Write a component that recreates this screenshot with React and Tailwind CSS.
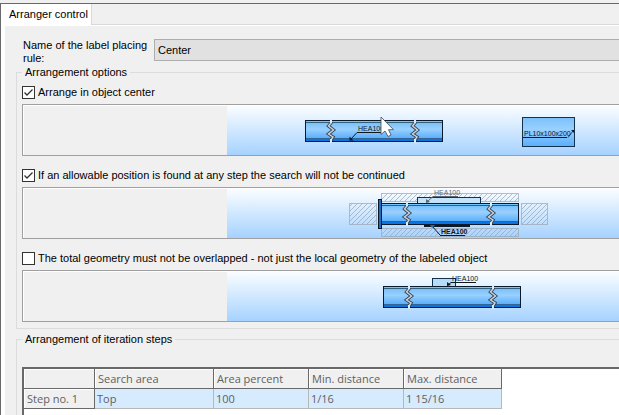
import { useState } from "react";
import clsx from "clsx";

const columns = [
  { name: "Search area", width: "w-[119px]" },
  { name: "Area percent", width: "w-[95px]" },
  { name: "Min. distance", width: "w-[95px]" },
  { name: "Max. distance", width: "w-[98px]" },
];

const steps = [{ name: "Step no. 1", values: ["Top", "100", "1/16", "1 15/16"] }];

const Break = ({ x }) => {
  const zigzag = `M${x} 2 V3 L${x - 2.5} 6 L${x + 2.5} 10 L${x - 2.5} 14 L${x + 2} 17 L${x} 20`;
  return (
    <g fill="none">
      <path d={zigzag} stroke="#33414f" strokeWidth="3.2" />
      <path d={zigzag} stroke="#c8d3de" strokeWidth="1.5" />
      <path d={`M${x} -1 V3 M${x} 19 V23`} stroke="#dcecfb" strokeWidth="2" />
    </g>
  );
};

const Beam = ({ x }) => (
  <g transform={`translate(${x} 14)`}>
    <rect width="138" height="22" fill="#0b1a2a" />
    <rect x="1" y="1" width="136" height="1.4" fill="#6fcbff" />
    <rect x="1" y="3" width="136" height="15.5" fill="url(#steel)" />
    <rect x="1" y="19" width="136" height="2" fill="#0a74e6" />
    <Break x={26} />
    <Break x={110} />
  </g>
);

const Hatch = ({ x, y, width, height }) => (
  <rect
    x={x + 0.5}
    y={y + 0.5}
    width={width}
    height={height}
    fill="url(#hatch)"
    stroke="#9aa7b4"
    strokeOpacity="0.7"
  />
);

const Tag = ({ x, y, width = 25, color = "#101820", bold, children }) => (
  <g>
    <text
      x={x}
      y={y}
      fill={color}
      className={clsx("font-['Liberation_Sans'] text-[7px]", bold && "font-bold")}
    >
      {children}
    </text>
    <path d={`M${x - 1} ${y + 1.5} h${width}`} stroke={color} />
  </g>
);

const Defs = () => (
  <defs>
    <linearGradient id="steel" x1="0" y1="0" x2="0" y2="1">
      <stop offset="0" stopColor="#7cc0fa" />
      <stop offset="0.4" stopColor="#99d0ff" />
      <stop offset="1" stopColor="#58aefc" />
    </linearGradient>
    <pattern id="hatch" width="5" height="5" patternUnits="userSpaceOnUse">
      <path d="M-1 6 L6 -1 M-1 1 L1 -1 M4 6 L6 4" stroke="#94a3b2" strokeWidth="0.7" />
    </pattern>
  </defs>
);

const CenterDrawing = () => (
  <>
    <Beam x={78} />
    <Tag x={131} y={25}>HEA100</Tag>
    <path d="M130 26.5 L124 33" stroke="#101820" />
    <path d="M122.500 34.500 v-4 l4 4 z" fill="#101820" />
    <rect x="295.500" y="11.500" width="52" height="29" fill="url(#steel)" stroke="#14324d" />
    <Tag x={297} y={30} width={44}>PL10x100x200</Tag>
    <path d="M341 31.500 L346 25" stroke="#101820" strokeWidth="0.8" />
    <path d="M347 24 v3 l-3 -3 z" fill="#101820" />
    <path
      d="M154 11 V28.500 L158 25 L161 30.500 L164 29 L161.500 23.700 H166.500 Z"
      fill="#fff"
      stroke="#3a4656"
      strokeWidth="0.8"
    />
  </>
);

const SearchDrawing = () => (
  <>
    <Hatch x={122} y={14} width={27} height={21} />
    <Hatch x={154} y={4} width={137} height={8} />
    <Hatch x={154} y={39} width={137} height={8} />
    <Hatch x={294} y={14} width={26} height={21} />
    <rect x="190.500" y="8.500" width="63" height="6" fill="#c4e3fb" stroke="#14324d" />
    <rect x="197" y="35" width="46" height="3" fill="#0b1a2a" />
    <Beam x={154} />
    <rect x="151.500" y="10.500" width="3" height="29" fill="#1c6fc4" stroke="#0b1a2a" />
    <Tag x={207} y={6} color="#5c6874">HEA100</Tag>
    <path d="M206 7.500 L201 12" stroke="#5c6874" />
    <path d="M199 14 v-4 l4 3 z" fill="#5c6874" />
    <path d="M205 37 L213 46" stroke="#101820" />
    <path d="M203 36 h5 l-3 3 z" fill="#1c6fc4" />
    <Tag x={214} y={45} bold>HEA100</Tag>
  </>
);

const OverlapDrawing = () => (
  <>
    <rect x="205.500" y="6.500" width="23" height="8" fill="#b7dcfa" stroke="#14324d" />
    <Beam x={156} />
    <Tag x={225} y={9}>HEA100</Tag>
    <path d="M224 10.500 L221 13" stroke="#101820" />
    <path d="M220 14 v-4 l4 3 z" fill="#101820" />
  </>
);

const options = [
  { id: "center", label: "Arrange in object center", Drawing: CenterDrawing },
  {
    id: "stop",
    label: "If an allowable position is found at any step the search will not be continued",
    Drawing: SearchDrawing,
  },
  {
    id: "overlap",
    label: "The total geometry must not be overlapped - not just the local geometry of the labeled object",
    Drawing: OverlapDrawing,
  },
];

const Option = ({ option, checked, onChange }) => {
  const { id, label, Drawing } = option;
  return (
    <div>
      <div className="flex h-[13px] items-center gap-[3px]">
        <span className="grid size-[13px] shrink-0">
          <input
            id={id}
            type="checkbox"
            checked={checked}
            onChange={onChange}
            className="col-start-1 row-start-1 size-[13px] appearance-none border border-[#333] bg-white"
          />
          {checked && (
            <svg viewBox="0 0 13 13" className="pointer-events-none col-start-1 row-start-1 size-[13px]">
              <path d="M2.500 6.500 L5 9 L10.500 3.500" fill="none" stroke="#333" strokeWidth="1.3" />
            </svg>
          )}
        </span>
        <label htmlFor={id} className="whitespace-nowrap">{label}</label>
      </div>
      <div className="mt-[5px] flex h-[52px] border border-r-0 border-[#a0a0a0] bg-white pt-px pl-px">
        <div className="w-[203px] shrink-0 bg-[#f0f0f0]" />
        <div className="min-w-0 flex-1 overflow-hidden bg-linear-to-b from-[#fafdff] to-[#a6d2ff]">
          <svg width="392" height="49" viewBox="0 0 392 49">
            <Defs />
            <Drawing />
          </svg>
        </div>
      </div>
    </div>
  );
};

const headCell =
  "h-5 border-r border-b border-[#696969] bg-[#f0f0f0] pt-px pl-[3px] text-left font-normal shadow-[inset_1px_1px_0_#fff]";

const StepsTable = () => (
  <div className="min-h-[60px] border-t-2 border-l-2 border-[#696969] bg-white">
    <table className="table-fixed border-separate border-spacing-0 font-['Open_Sans','Noto_Sans',sans-serif] text-[11px] leading-[18px] text-[#606060]">
      <thead>
        <tr>
          <th className={clsx(headCell, "w-[71px]")} />
          {columns.map((column) => (
            <th key={column.name} scope="col" className={clsx(headCell, column.width)}>
              {column.name}
            </th>
          ))}
        </tr>
      </thead>
      <tbody>
        {steps.map((step) => (
          <tr key={step.name}>
            <th scope="row" className={headCell}>{step.name}</th>
            {step.values.map((value) => (
              <td key={value} className="h-5 border-r border-b border-[#b8b8b8] bg-[#d7ebff] pt-px pl-0.5">
                {value}
              </td>
            ))}
          </tr>
        ))}
      </tbody>
    </table>
  </div>
);

const Group = ({ title, children, className }) => (
  <fieldset className={clsx("min-w-0 border border-r-0 border-[#dcdcdc] pl-[5px]", className)}>
    <legend className="px-[3px]">{title}</legend>
    {children}
  </fieldset>
);

export default function App() {
  const [checked, setChecked] = useState({ center: true, stop: true, overlap: false });

  const toggle = (id) => setChecked({ ...checked, [id]: !checked[id] });

  return (
    <div className="flex min-h-screen flex-col overflow-hidden bg-[#f0f0f0] pt-[3px] font-['Liberation_Sans',Arial,sans-serif] text-[11px] leading-[13px] text-black">
      <div className="flex flex-1 flex-col border-t border-l border-[#696969]">
        <div role="tablist" className="flex border-l border-white">
          <button role="tab" aria-selected="true" className="h-[21px] w-[89px] bg-white pl-[7px] text-left whitespace-nowrap">
            Arranger control
          </button>
          <div className="flex-1 border-b border-l border-[#d9d9d9]" />
        </div>
        <main className="flex-1 border-t border-l-4 border-white pl-[11px]">
          <div className="flex items-start pt-[13px] pl-[7px]">
            <label htmlFor="rule" className="w-[131px] shrink-0">
              Name of the label placing rule:
            </label>
            <select
              id="rule"
              disabled
              className="h-[22px] min-w-0 flex-1 appearance-none border border-r-0 border-[#adadad] bg-[#e1e1e1] pl-[3px] text-black opacity-100"
            >
              <option>Center</option>
            </select>
          </div>
          <Group title="Arrangement options" className="mt-px pb-1.5">
            <div className="flex flex-col gap-[13px] pt-[7px]">
              {options.map((option) => (
                <Option
                  key={option.id}
                  option={option}
                  checked={checked[option.id]}
                  onChange={() => toggle(option.id)}
                />
              ))}
            </div>
          </Group>
          <Group title="Arrangement of iteration steps" className="mt-1">
            <div className="pt-[21px]">
              <StepsTable />
            </div>
          </Group>
        </main>
      </div>
    </div>
  );
}
